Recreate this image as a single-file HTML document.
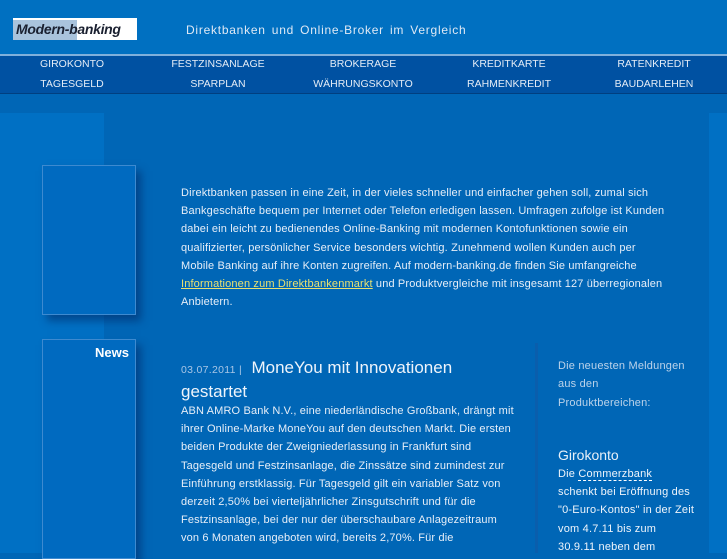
<!DOCTYPE html>
<html><head><meta charset="utf-8"><style>
*{margin:0;padding:0;box-sizing:border-box}
body{width:727px;height:545px;overflow:hidden;background:#0066b6;font-family:"Liberation Sans",sans-serif;color:#e6eef8;position:relative}
.top{position:absolute;left:0;top:0;width:727px;height:54px;background:#0070c1}
.logo{position:absolute;left:13px;top:18px;width:124px;height:22px;background:#fff;border-top:2px solid #fff}
.logo .l{position:absolute;left:0;top:0;width:64px;height:20px;background:#a9c3dc}
.logo span{position:absolute;left:3px;top:1px;font:italic bold 14px "Liberation Sans",sans-serif;color:#1a2030;letter-spacing:-0.3px}
.tag{position:absolute;left:186px;top:23px;font-size:12px;letter-spacing:0.75px;word-spacing:2px;color:#dfe9f5}
.line{position:absolute;left:0;top:54px;width:727px;height:2px;background:#7fb0dc}
.nav{position:absolute;left:0;top:56px;width:727px;height:38px;background:#0051a2;border-bottom:1px solid #003f80}
.nav div{position:absolute;font-size:10.5px;color:#e4ecf6;transform:translateX(-50%);white-space:nowrap}
.ls{position:absolute;left:0;top:113px;width:104px;height:440px;background:#0070c4}
.rs{position:absolute;left:709px;top:113px;width:18px;height:440px;background:#0070c4}
.box{position:absolute;left:42px;width:94px;background:#006ac0;border:1px solid #3d8ad0;box-shadow:5px 6px 8px rgba(0,40,100,.55)}
.p{position:absolute;left:181px;top:184px;white-space:nowrap;font-size:11px;line-height:18.2px;letter-spacing:.15px}
.p a{color:#e8e070;text-decoration:underline}
.news{position:absolute;left:181px;top:357px;white-space:nowrap;font-size:11px;line-height:18.2px;letter-spacing:.15px}
.news .d{font-size:10.5px;color:#a8c6e6;letter-spacing:.3px}
.news h2{font-weight:normal;font-size:17px;line-height:22px;color:#eef4fb;letter-spacing:0;margin-bottom:-1px}
.div{position:absolute;left:535px;top:343px;width:3px;height:210px;background:#0a5eac}
.side{position:absolute;left:558px;top:357px;white-space:nowrap;font-size:11px;line-height:18.3px;color:#bcd3ea;letter-spacing:.2px}
.side h3{font-weight:normal;font-size:14px;color:#e8f0f8;margin-top:33px;line-height:20px;letter-spacing:0}
.side p{color:#eef4fb}
</style></head><body>
<div class="top"></div>
<div class="logo"><div class="l"></div><span>Modern-banking</span></div>
<div class="tag">Direktbanken und Online-Broker im Vergleich</div>
<div class="line"></div>
<div class="nav">
<div style="left:72px;top:2px">GIROKONTO</div>
<div style="left:218px;top:2px">FESTZINSANLAGE</div>
<div style="left:363px;top:2px">BROKERAGE</div>
<div style="left:509px;top:2px">KREDITKARTE</div>
<div style="left:654px;top:2px">RATENKREDIT</div>
<div style="left:72px;top:22px">TAGESGELD</div>
<div style="left:218px;top:22px">SPARPLAN</div>
<div style="left:363px;top:22px">WÄHRUNGSKONTO</div>
<div style="left:509px;top:22px">RAHMENKREDIT</div>
<div style="left:654px;top:22px">BAUDARLEHEN</div>
</div>
<div class="ls"></div><div class="rs"></div>
<div class="box" style="top:165px;height:150px"></div>
<div class="box" style="top:339px;height:220px"><div style="position:absolute;right:6px;top:5px;font-weight:bold;font-size:13px;color:#fff">News</div></div>
<div class="p">Direktbanken passen in eine Zeit, in der vieles schneller und einfacher gehen soll, zumal sich<br>Bankgeschäfte bequem per Internet oder Telefon erledigen lassen. Umfragen zufolge ist Kunden<br>dabei ein leicht zu bedienendes Online-Banking mit modernen Kontofunktionen sowie ein<br>qualifizierter, persönlicher Service besonders wichtig. Zunehmend wollen Kunden auch per<br>Mobile Banking auf ihre Konten zugreifen. Auf modern-banking.de finden Sie umfangreiche<br><a>Informationen zum Direktbankenmarkt</a> und Produktvergleiche mit insgesamt 127 überregionalen<br>Anbietern.</div>
<div class="news"><h2><span class="d">03.07.2011 |</span>&nbsp; MoneYou mit Innovationen<br>gestartet</h2>ABN AMRO Bank N.V., eine niederländische Großbank, drängt mit<br>ihrer Online-Marke MoneYou auf den deutschen Markt. Die ersten<br>beiden Produkte der Zweigniederlassung in Frankfurt sind<br>Tagesgeld und Festzinsanlage, die Zinssätze sind zumindest zur<br>Einführung erstklassig. Für Tagesgeld gilt ein variabler Satz von<br>derzeit 2,50% bei vierteljährlicher Zinsgutschrift und für die<br>Festzinsanlage, bei der nur der überschaubare Anlagezeitraum<br>von 6 Monaten angeboten wird, bereits 2,70%. Für die</div>
<div class="div"></div>
<div class="side">Die neuesten Meldungen<br>aus den<br>Produktbereichen:<h3>Girokonto</h3><p>Die <span style="border-bottom:1px dashed #fff">Commerzbank</span><br>schenkt bei Eröffnung des<br>"0-Euro-Kontos" in der Zeit<br>vom 4.7.11 bis zum<br>30.9.11 neben dem</p></div>
</body></html>
